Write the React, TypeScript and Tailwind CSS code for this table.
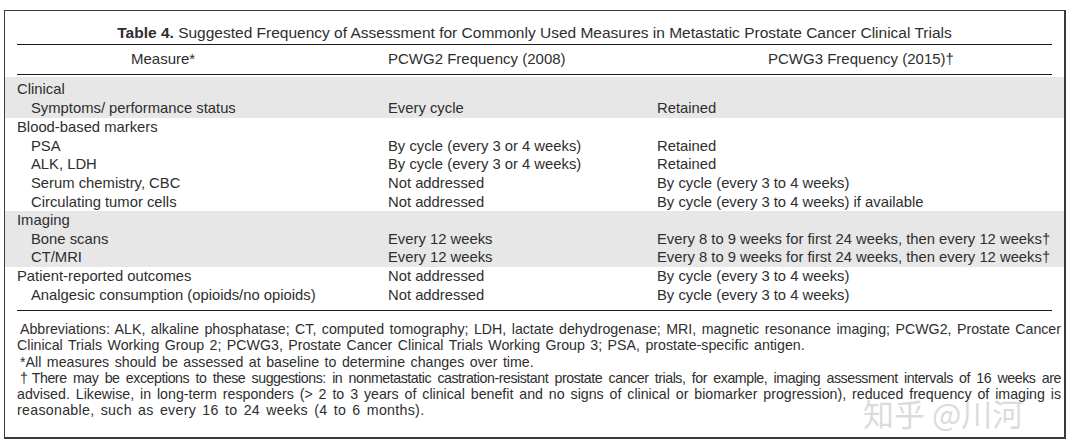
const rows: { label: string; indent?: boolean; v2?: string; v3?: string }[][] = [
  [
    { label: 'Clinical' },
    { label: 'Symptoms/ performance status', indent: true, v2: 'Every cycle', v3: 'Retained' },
  ],
  [
    { label: 'Blood-based markers' },
    { label: 'PSA', indent: true, v2: 'By cycle (every 3 or 4 weeks)', v3: 'Retained' },
    { label: 'ALK, LDH', indent: true, v2: 'By cycle (every 3 or 4 weeks)', v3: 'Retained' },
    { label: 'Serum chemistry, CBC', indent: true, v2: 'Not addressed', v3: 'By cycle (every 3 to 4 weeks)' },
    { label: 'Circulating tumor cells', indent: true, v2: 'Not addressed', v3: 'By cycle (every 3 to 4 weeks) if available' },
  ],
  [
    { label: 'Imaging' },
    { label: 'Bone scans', indent: true, v2: 'Every 12 weeks', v3: 'Every 8 to 9 weeks for first 24 weeks, then every 12 weeks\u2020' },
    { label: 'CT/MRI', indent: true, v2: 'Every 12 weeks', v3: 'Every 8 to 9 weeks for first 24 weeks, then every 12 weeks\u2020' },
  ],
  [
    { label: 'Patient-reported outcomes', v2: 'Not addressed', v3: 'By cycle (every 3 to 4 weeks)' },
    { label: 'Analgesic consumption (opioids/no opioids)', indent: true, v2: 'Not addressed', v3: 'By cycle (every 3 to 4 weeks)' },
  ],
];

function Row({ label, indent, v2, v3 }: { label: string; indent?: boolean; v2?: string; v3?: string }) {
  return (
    <div className="flex h-[18.6px] items-center whitespace-nowrap">
      <div className={`w-[371px] shrink-0 ${indent ? 'pl-[14px]' : ''}`}>{label}</div>
      <div className="w-[269px] shrink-0">{v2}</div>
      <div>{v3}</div>
    </div>
  );
}

export default function App() {
  return (
    <div
      className="w-[1072px] h-[446px] bg-white pt-[10px] pl-[4px] text-[#2e2e2e]"
      style={{ fontFamily: '"Liberation Sans", Arial, sans-serif' }}
    >
      <div className="relative w-[1062px] h-[429px] border border-[#3a3a3a] border-r-2 border-b-2">
        {/* title + header */}
        <div className="px-[12px]">
          <div className="h-[33px] pt-[13px] text-center text-[15.5px] leading-[18.6px] whitespace-nowrap">
            <span className="font-bold">Table 4.</span> Suggested Frequency of Assessment for Commonly Used
            Measures in Metastatic Prostate Cancer Clinical Trials
          </div>
          <div className="h-px bg-[#1a1a1a]" />
          <div className="flex h-[29px] items-center text-[15px] whitespace-nowrap">
            <div className="w-[371px] shrink-0 pl-[114px]">Measure*</div>
            <div className="w-[269px] shrink-0">PCWG2 Frequency (2008)</div>
            <div className="pl-[111px]">PCWG3 Frequency (2015)†</div>
          </div>
          <div className="h-px bg-[#1a1a1a]" />
        </div>

        {/* body */}
        <div className="mt-[2px] text-[14.8px] leading-[18.6px]">
          {rows.map((group, gi) => (
            <div
              key={gi}
              className={`pl-[12px] ${gi % 2 === 0 ? 'bg-[#e7e7e7]' : ''} ${gi === 0 ? 'pt-[3px] pb-px' : ''}`}
            >
              {group.map((r) => (
                <Row key={r.label} {...r} />
              ))}
            </div>
          ))}
        </div>

        <div className="mx-[12px] mt-[6px] h-px bg-[#1a1a1a]" />

        {/* footnotes */}
        <div className="pl-[12px] pr-[3px] pt-[10px] text-[14.2px] leading-[16.2px] whitespace-nowrap">
          <div className="pl-[3px] text-justify [text-align-last:justify]">
            Abbreviations: ALK, alkaline phosphatase; CT, computed tomography; LDH, lactate dehydrogenase; MRI,
            magnetic resonance imaging; PCWG2, Prostate Cancer
          </div>
          <div className="[word-spacing:1.5px]">
            Clinical Trials Working Group 2; PCWG3, Prostate Cancer Clinical Trials Working Group 3; PSA,
            prostate-specific antigen.
          </div>
          <div className="pl-[3px] [word-spacing:1.6px]">
            *All measures should be assessed at baseline to determine changes over time.
          </div>
          <div className="pl-[3px] text-justify [text-align-last:justify] tracking-[-0.45px] [word-spacing:-1.5px]">
            †There may be exceptions to these suggestions: in nonmetastatic castration-resistant prostate cancer trials,
            for example, imaging assessment intervals of 16 weeks are
          </div>
          <div className="text-justify [text-align-last:justify]">
            advised. Likewise, in long-term responders (&gt; 2 to 3 years of clinical benefit and no signs of clinical or
            biomarker progression), reduced frequency of imaging is
          </div>
          <div className="tracking-[0.3px] [word-spacing:2px]">
            reasonable, such as every 16 to 24 weeks (4 to 6 months).
          </div>
        </div>

        <div
          className="absolute left-[858px] top-[386px] text-[31px] leading-none whitespace-nowrap text-[#c4c4c4]/60"
          style={{ fontFamily: '"Noto Sans CJK SC", sans-serif' }}
        >
          知乎 @川河
        </div>
      </div>
    </div>
  );
}
